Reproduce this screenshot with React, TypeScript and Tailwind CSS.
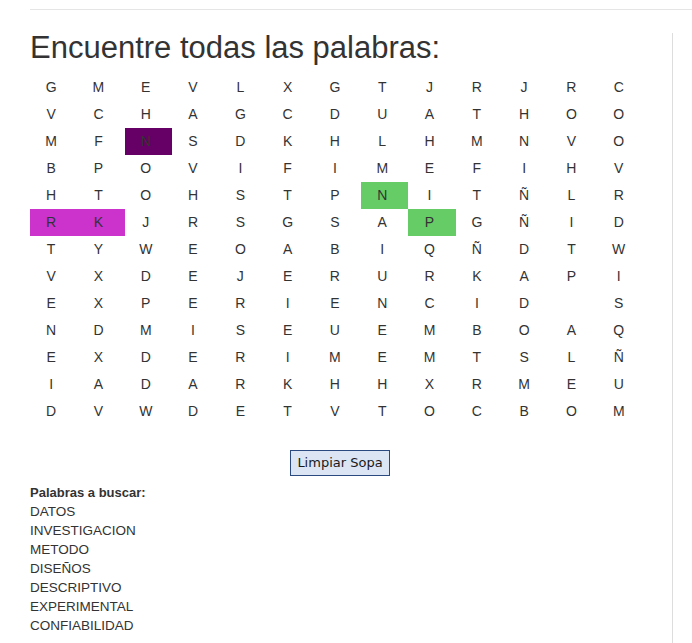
const grid = [
  "GMEVLXGTJRJRC",
  "VCHAGCDUATHOO",
  "MFNSDKHLHMNVO",
  "BPOVIFIMEFIHV",
  "HTOHSTPNITÑLR",
  "RKJRSGSAPGÑID",
  "TYWEOABIQÑDTW",
  "VXDEJERURKAPI",
  "EXPERIENCID S",
  "NDMISEUEMBOAQ",
  "EXDERIMEMTSLÑ",
  "IADARKHHXRMEU",
  "DVWDETVTOCBOM",
];

// highlighted cells: "row-col" -> background class
const marks: Record<string, string> = {
  "2-2": "bg-[#660066]",
  "5-0": "bg-[#cc33cc]",
  "5-1": "bg-[#cc33cc]",
  "4-7": "bg-[#66cc66]",
  "5-8": "bg-[#66cc66]",
};

const words = [
  "DATOS",
  "INVESTIGACION",
  "METODO",
  "DISEÑOS",
  "DESCRIPTIVO",
  "EXPERIMENTAL",
  "CONFIABILIDAD",
];

export default function App() {
  return (
    <div className="w-[692px] h-[643px] overflow-hidden bg-white text-[#333] font-['Liberation_Sans',Arial,sans-serif]">
      <div className="pt-[9px]">
        <div className="ml-[30px] border-t border-[#e5e5e5]" />
      </div>

      <div className="mt-[23px] ml-[30px] w-[643px] h-[620px] border-r border-[#ddd]">
        <h2 className="text-[31px] leading-[30px] font-normal text-[#333]">
          Encuentre todas las palabras:
        </h2>

        {/* Sopa de letras */}
        <div className="mt-[11px] grid grid-cols-[repeat(13,47.3px)] w-[615px]">
          {grid.map((row, r) =>
            Array.from(row).map((ch, c) => (
              <div
                key={`${r}-${c}`}
                className={`h-[27px] flex items-center justify-center pr-[5px] text-[14px] leading-[27px] ${marks[`${r}-${c}`] ?? ""}`}
              >
                {ch.trim()}
              </div>
            ))
          )}
        </div>

        <div className="mt-[25px] w-[620px] flex justify-center">
          <button className="w-[100px] h-[26px] bg-[#dbe5f3] border border-[#2b4a80] text-[13px] text-[#1a1a1a] font-['DejaVu_Sans',Verdana,sans-serif]">
            Limpiar Sopa
          </button>
        </div>

        <div className="mt-[7px] text-[13.5px] leading-[19px]">
          <p className="font-bold text-[13px]">Palabras a buscar:</p>
          {words.map((w) => (
            <p key={w}>{w}</p>
          ))}
        </div>
      </div>
    </div>
  );
}
